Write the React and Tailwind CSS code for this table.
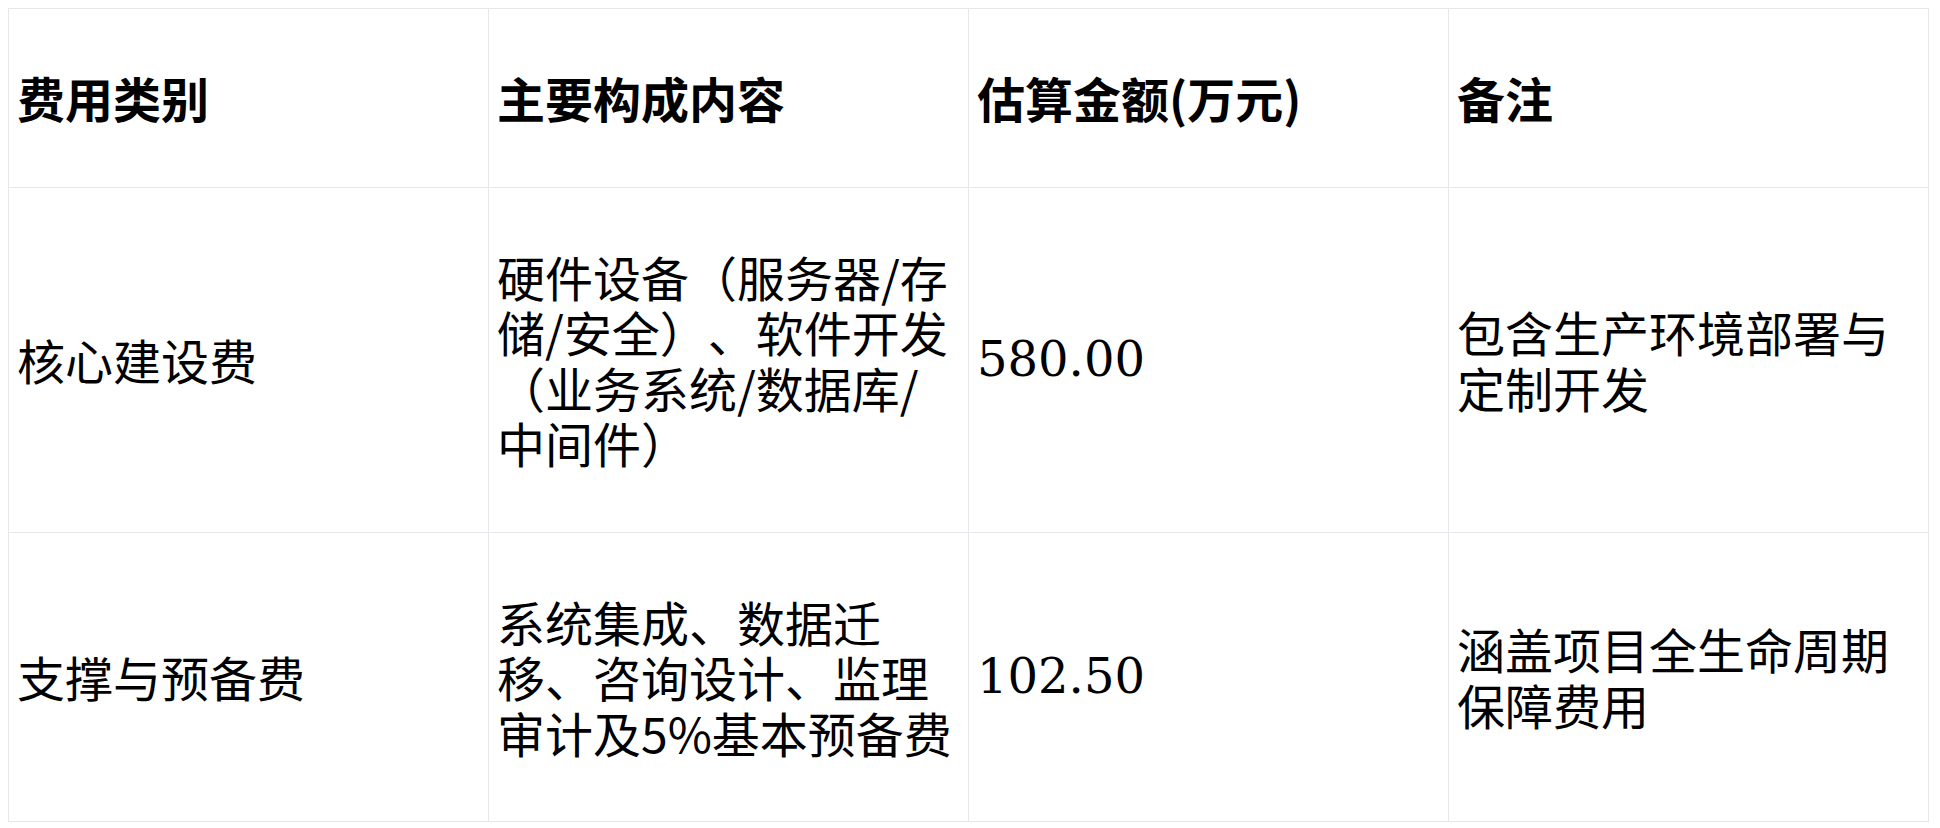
const rows = [
    {
        category: '核心建设费',
        content: '硬件设备（服务器/存储/安全）、软件开发（业务系统/数据库/中间件）',
        amount: '580.00',
        note: '包含生产环境部署与定制开发',
    },
    {
        category: '支撑与预备费',
        content: '系统集成、数据迁移、咨询设计、监理审计及5%基本预备费',
        amount: '102.50',
        note: '涵盖项目全生命周期保障费用',
    },
];

const headers = ['费用类别', '主要构成内容', '估算金额(万元)', '备注'];

const cell = 'border border-[#e5e7eb] px-2 py-[61px] align-middle text-left';

const App = () => {
    return (
        <div className="min-h-screen bg-white p-2 text-black">
            <table className="w-[1921px] table-fixed border-collapse font-['Noto_Sans_CJK_SC',sans-serif] text-[48px] leading-[55.5px] [text-spacing-trim:space-all]">
                <thead>
                    <tr>
                        {headers.map((h) => (
                            <th key={h} className={`${cell} font-bold`}>{h}</th>
                        ))}
                    </tr>
                </thead>
                <tbody>
                    {rows.map((row) => (
                        <tr key={row.category}>
                            <td className={cell}>{row.category}</td>
                            <td className={cell}>{row.content}</td>
                            <td className={`${cell} font-['DejaVu_Serif',serif]`}>{row.amount}</td>
                            <td className={cell}>{row.note}</td>
                        </tr>
                    ))}
                </tbody>
            </table>
        </div>
    );
};

export default App;
